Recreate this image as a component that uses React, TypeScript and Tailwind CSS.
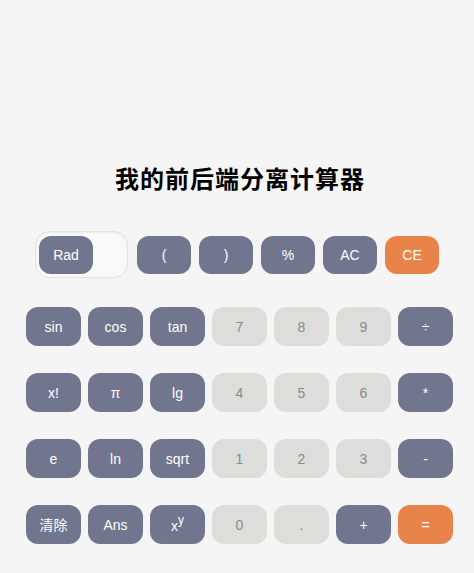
import { useState } from 'react'

type Kind = 'fn' | 'num' | 'accent'

const KEYS: { label: React.ReactNode; kind: Kind }[][] = [
  [
    { label: 'sin', kind: 'fn' },
    { label: 'cos', kind: 'fn' },
    { label: 'tan', kind: 'fn' },
    { label: '7', kind: 'num' },
    { label: '8', kind: 'num' },
    { label: '9', kind: 'num' },
    { label: '÷', kind: 'fn' },
  ],
  [
    { label: 'x!', kind: 'fn' },
    { label: 'π', kind: 'fn' },
    { label: 'lg', kind: 'fn' },
    { label: '4', kind: 'num' },
    { label: '5', kind: 'num' },
    { label: '6', kind: 'num' },
    { label: '*', kind: 'fn' },
  ],
  [
    { label: 'e', kind: 'fn' },
    { label: 'ln', kind: 'fn' },
    { label: 'sqrt', kind: 'fn' },
    { label: '1', kind: 'num' },
    { label: '2', kind: 'num' },
    { label: '3', kind: 'num' },
    { label: '-', kind: 'fn' },
  ],
  [
    { label: '清除', kind: 'fn' },
    { label: 'Ans', kind: 'fn' },
    {
      label: (
        <span className="relative top-[1px]">
          x<sup className="relative -top-[7px] text-[12px]">y</sup>
        </span>
      ),
      kind: 'fn',
    },
    { label: '0', kind: 'num' },
    { label: '.', kind: 'num' },
    { label: '+', kind: 'fn' },
    { label: '=', kind: 'accent' },
  ],
]

const kindClass: Record<Kind, string> = {
  fn: 'bg-[#71768e] text-white',
  num: 'bg-[#dddddc] text-[#8a8a8a]',
  accent: 'bg-[#e8844a] text-white',
}

function Key({ label, kind, className = '' }: { label: React.ReactNode; kind: Kind; className?: string }) {
  return (
    <button
      className={`flex items-center justify-center rounded-[12px] text-[14px] leading-none ${kindClass[kind]} ${className}`}
    >
      {label}
    </button>
  )
}

export default function App() {
  const [rad, setRad] = useState(true)

  return (
    <div
      className="min-h-screen bg-[#f6f5f5] pt-[164px]"
      style={{ fontFamily: '"Liberation Sans", Arial, "Noto Sans CJK SC", sans-serif' }}
    >
      <h1 className="pl-[6px] text-center text-[24px] leading-[32px] font-bold text-black tracking-[1px]">
        我的前后端分离计算器
      </h1>

      {/* 顶部：角度切换 + 括号/清除 */}
      <div className="mt-[35px] flex items-center pl-[35px]">
        <div
          className="flex h-[47px] w-[93px] items-center rounded-[14px] border border-[#e2e2e2] bg-[#f9f9f9] pl-[3px] shadow-[inset_0_1px_2px_rgba(0,0,0,0.06)]"
          onClick={() => setRad((r) => !r)}
        >
          <Key label={rad ? 'Rad' : 'Deg'} kind="fn" className="h-[38px] w-[54px]" />
        </div>
        <div className="ml-[9px] flex gap-[8px]">
          {['(', ')', '%', 'AC'].map((k) => (
            <Key key={k} label={k} kind="fn" className="h-[38px] w-[54px]" />
          ))}
          <Key label="CE" kind="accent" className="h-[38px] w-[54px]" />
        </div>
      </div>

      {/* 主键盘 */}
      <div className="mt-[29px] grid w-max grid-cols-[repeat(7,55px)] auto-rows-[39px] gap-x-[7px] gap-y-[27px] pl-[26px]">
        {KEYS.flat().map((k, i) => (
          <Key key={i} label={k.label} kind={k.kind} />
        ))}
      </div>
    </div>
  )
}
